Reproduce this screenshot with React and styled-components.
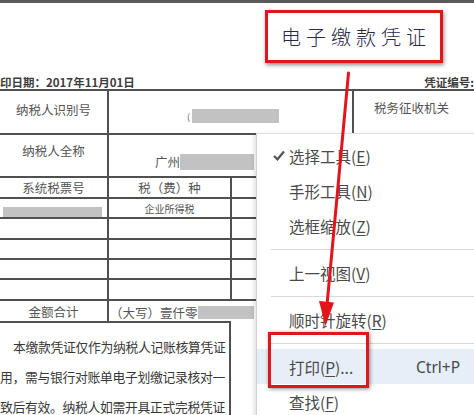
import React from "react";
import styled, { createGlobalStyle } from "styled-components";

const GlobalStyle = createGlobalStyle`
  html, body {
    margin: 0;
    padding: 0;
    background: #ffffff;
  }
  * {
    box-sizing: border-box;
  }
`;

const DOC_FONT = `"Noto Sans CJK SC", "Noto Sans", sans-serif`;
const LINE = "2px solid #505050";

export default function App() {
  return (
    <>
      <GlobalStyle />
      <Page>
        <TopStrip />
        <Header>
          <TitleBox>电子缴款凭证</TitleBox>
          <DateRow>
            <DateText>印日期：2017年11月01日</DateText>
            <DateText>凭证编号:</DateText>
          </DateRow>
        </Header>

        <Table>
          <Row $h={44}>
            <Cell $w={109} $line $pt={9}>
              纳税人识别号
            </Cell>
            <Cell $w={245} $line $align="flex-start">
              <ValueWrap $pl={78} $pt={18}>
                <Tiny>(</Tiny>
                <Redact $w={87} $h={14} />
              </ValueWrap>
            </Cell>
            <Cell $w={130} $pt={7} $pl={20}>
              税务征收机关
            </Cell>
          </Row>
          <Row $h={43}>
            <Cell $w={109} $line $pt={6}>
              纳税人全称
            </Cell>
            <Cell $w={260} $align="flex-start">
              <ValueWrap $pl={46} $pt={17}>
                <span>广州</span>
                <Redact $w={74} $h={16} />
              </ValueWrap>
            </Cell>
          </Row>
          <Row $h={21}>
            <Cell $w={109} $line>系统税票号</Cell>
            <Cell $w={123} $line>税（费）种</Cell>
            <Cell $w={40} />
          </Row>
          <Row $h={20}>
            <Cell $w={109} $line $align="flex-start">
              <ValueWrap $pl={3} $pt={8}>
                <Redact $w={99} $h={10} />
              </ValueWrap>
            </Cell>
            <Cell $w={123} $line $small>
              企业所得税
            </Cell>
            <Cell $w={40} />
          </Row>
          {[21, 20, 20, 21].map((h, i) => (
            <Row key={i} $h={h}>
              <Cell $w={109} $line />
              <Cell $w={123} $line />
              <Cell $w={40} />
            </Row>
          ))}
          <Row $h={22} $open>
            <Cell $w={109} $line>金额合计</Cell>
            <Cell $w={160} $align="flex-start">
              <ValueWrap $pl={1} $pt={2}>
                <span>（大写）壹仟零</span>
                <Redact $w={56} $h={13} />
              </ValueWrap>
            </Cell>
          </Row>
        </Table>

        <Notes>
          <NoteText>
            <NoteLine $indent={13}>本缴款凭证仅作为纳税人记账核算凭证</NoteLine>
            <NoteLine>用，需与银行对账单电子划缴记录核对一</NoteLine>
            <NoteLine>致后有效。纳税人如需开具正式完税凭证</NoteLine>
          </NoteText>
        </Notes>

        <Menu>
          <MenuItem>
            <IconSlot>
              <svg width="12" height="11" viewBox="0 0 12 11">
                <path
                  d="M1 6 L4.5 9.3 L11 1.5"
                  fill="none"
                  stroke="#555"
                  strokeWidth="2.3"
                />
              </svg>
            </IconSlot>
            <Label>
              选择工具(<u>E</u>)
            </Label>
          </MenuItem>
          <MenuItem>
            <IconSlot />
            <Label>
              手形工具(<u>N</u>)
            </Label>
          </MenuItem>
          <MenuItem>
            <IconSlot />
            <Label>
              选框缩放(<u>Z</u>)
            </Label>
          </MenuItem>
          <Separator />
          <MenuItem>
            <IconSlot />
            <Label>
              上一视图(<u>V</u>)
            </Label>
          </MenuItem>
          <Separator />
          <MenuItem>
            <IconSlot />
            <Label>
              顺时针旋转(<u>R</u>)
            </Label>
          </MenuItem>
          <Separator />
          <MenuItem $active>
            <IconSlot />
            <Label>
              打印(<u>P</u>)...
            </Label>
            <Shortcut>Ctrl+P</Shortcut>
          </MenuItem>
          <MenuItem>
            <IconSlot />
            <Label>
              查找(<u>F</u>)
            </Label>
          </MenuItem>
        </Menu>

        <Highlight />

        <Arrow viewBox="0 0 474 415" width="474" height="415">
          <line
            x1="348.5"
            y1="73"
            x2="327"
            y2="305"
            stroke="#e3151c"
            strokeWidth="3"
            strokeLinecap="round"
          />
          <polygon points="319,301 334,302.5 325.5,326" fill="#e3151c" />
        </Arrow>
      </Page>
    </>
  );
}

const Page = styled.div`
  position: relative;
  width: 474px;
  height: 415px;
  overflow: hidden;
  background: #ffffff;
  font-family: ${DOC_FONT};
`;

const TopStrip = styled.div`
  height: 3px;
  background: #5a5a5a;
`;

const Header = styled.div`
  height: 86px;
  display: flex;
  flex-direction: column;
`;

const TitleBox = styled.div`
  margin: 7px 0 0 265px;
  width: 178px;
  height: 53px;
  border: 3px solid #e3151c;
  box-shadow: 1px 2px 4px rgba(0, 0, 0, 0.45);
  display: flex;
  align-items: center;
  justify-content: center;
  padding-left: 4px;
  font-size: 20px;
  letter-spacing: 5px;
  color: #2a2a48;
  font-weight: 300;
`;

const DateRow = styled.div`
  margin-top: auto;
  display: flex;
  justify-content: space-between;
`;

const DateText = styled.span`
  font-size: 11.5px;
  line-height: 14px;
  font-weight: 700;
  color: #3c3c3c;
  white-space: nowrap;
`;

const Table = styled.div`
  border-top: ${LINE};
`;

const Row = styled.div`
  display: flex;
  height: ${(p) => p.$h}px;
  border-bottom: ${LINE};
  width: ${(p) => (p.$open ? "231px" : "100%")};
`;

const Cell = styled.div`
  flex: 0 0 ${(p) => p.$w}px;
  height: 100%;
  display: flex;
  justify-content: ${(p) => (p.$pl ? "flex-start" : "center")};
  align-items: ${(p) => p.$align || (p.$pt ? "flex-start" : "center")};
  padding-top: ${(p) => p.$pt || 0}px;
  padding-left: ${(p) => p.$pl || 0}px;
  border-right: ${(p) => (p.$line ? LINE : "none")};
  font-size: ${(p) => (p.$small ? "10px" : "12.5px")};
  color: #555555;
  white-space: nowrap;
`;

const ValueWrap = styled.div`
  width: 100%;
  display: flex;
  align-items: center;
  padding-left: ${(p) => p.$pl}px;
  padding-top: ${(p) => p.$pt}px;
  font-size: 12.5px;
  color: #555555;
`;

const Tiny = styled.span`
  font-size: 9px;
  margin-right: 2px;
`;

const Redact = styled.span`
  display: inline-block;
  flex: 0 0 auto;
  width: ${(p) => p.$w}px;
  height: ${(p) => p.$h}px;
  background: #c2c2c2;
`;

const Notes = styled.div`
  display: flex;
  margin-top: -2px;
`;

const NoteText = styled.div`
  width: 231px;
  height: 100px;
  border-right: ${LINE};
  padding-top: 11px;
`;

const NoteLine = styled.div`
  padding-left: ${(p) => p.$indent || 0}px;
  font-size: 12.8px;
  line-height: 30px;
  letter-spacing: -0.3px;
  color: #383838;
  white-space: nowrap;
`;

const Menu = styled.div`
  position: absolute;
  left: 256px;
  top: 133px;
  width: 240px;
  height: 300px;
  background: #ffffff;
  border-left: 1px solid #d0d0d0;
  border-top: 1px solid #e0e0e0;
  box-shadow: -2px 1px 4px rgba(0, 0, 0, 0.12);
  padding-top: 4px;
  font-family: "Noto Sans CJK SC", "Noto Sans", sans-serif;
`;

const MenuItem = styled.div`
  height: 35px;
  display: flex;
  align-items: center;
  background: ${(p) => (p.$active ? "#e6eef8" : "transparent")};
  color: #4a4a4a;
  font-size: 15.5px;
`;

const IconSlot = styled.div`
  flex: 0 0 32px;
  padding-left: 16px;
  display: flex;
  align-items: center;
`;

const Label = styled.span`
  flex: 0 0 127px;
  white-space: nowrap;
  u {
    text-underline-offset: 2px;
  }
`;

const Shortcut = styled.span`
  font-family: "Noto Sans", sans-serif;
  font-size: 15.5px;
  color: #4a4a4a;
  white-space: nowrap;
`;

const Separator = styled.div`
  height: 12px;
  margin-left: 14px;
  display: flex;
  align-items: center;
  &::after {
    content: "";
    flex: 1;
    height: 1px;
    background: #d9d9d9;
  }
`;

const Highlight = styled.div`
  position: absolute;
  left: 268px;
  top: 332px;
  width: 101px;
  height: 56px;
  border: 3px solid #e3151c;
  box-shadow: 1px 1px 4px rgba(0, 0, 0, 0.45);
  pointer-events: none;
`;

const Arrow = styled.svg`
  position: absolute;
  left: 0;
  top: 0;
  pointer-events: none;
`;
